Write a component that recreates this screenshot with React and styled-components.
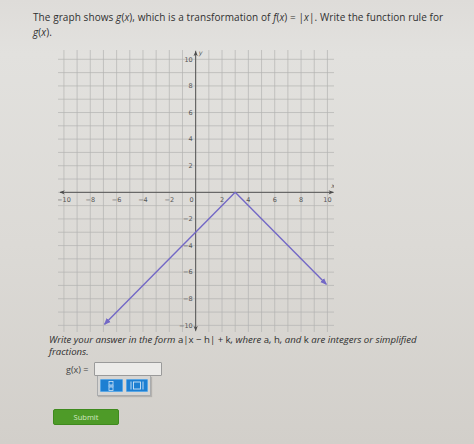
import React from "react";
import styled, { createGlobalStyle } from "styled-components";

const GlobalStyle = createGlobalStyle`
  html, body {
    margin: 0;
    padding: 0;
  }
  body {
    width: 474px;
    height: 444px;
    overflow: hidden;
    background: linear-gradient(180deg, #dedcd9 0%, #e2e1de 12%, #dcdad6 55%, #d2cfca 100%);
    font-family: "Open Sans", "DejaVu Sans", sans-serif;
    color: #2c2c2c;
  }
`;

const Page = styled.div`
  padding: 10px 20px 0 33px;
`;

const Question = styled.p`
  margin: 0;
  font-size: 10px;
  line-height: 15px;
  letter-spacing: 0.08px;
  color: #303030;
  em {
    font-style: italic;
  }
`;

const GraphWrap = styled.div`
  margin: 10px 0 0 25px;
  width: 276px;
  height: 282px;
`;

const Instruction = styled.p`
  margin: 2px 0 0 16px;
  font-size: 9.6px;
  line-height: 12px;
  font-style: italic;
  color: #2e2e2e;
  span {
    font-style: normal;
  }
`;

const AnswerRow = styled.div`
  display: flex;
  align-items: center;
  gap: 6px;
  margin: 4px 0 0 33px;
`;

const Label = styled.span`
  font-size: 9px;
  color: #444;
`;

const Input = styled.div`
  width: 66px;
  height: 12px;
  background: #ecebe9;
  border: 1px solid #9a9a9a;
  border-radius: 1px;
`;

const Palette = styled.div`
  display: flex;
  gap: 3px;
  width: 48px;
  margin: 0 0 0 64px;
  padding: 3px 2px 3px 2px;
  background: #d6d5d3;
  border: 1px solid #a9abad;
  border-top: none;
  box-shadow: 1px 1px 1px rgba(0, 0, 0, 0.15);
`;

const PaletteButton = styled.button`
  display: flex;
  align-items: center;
  justify-content: center;
  width: 23px;
  height: 13px;
  padding: 0;
  background: #1d7fd2;
  border: 1px solid #5aa6e4;
  border-radius: 1px;
`;

const SubmitButton = styled.button`
  display: block;
  margin: 13px 0 0 20px;
  width: 66px;
  height: 16px;
  padding: 0;
  background: #4e9b28;
  border: 1px solid #3f8a1e;
  border-radius: 2px;
  color: #d4e8c4;
  font-family: "Open Sans", "DejaVu Sans", sans-serif;
  font-size: 7.5px;
`;

const W = 276;
const H = 282;
const XMIN = -10.45;
const XMAX = 10.5;
const YMIN = -10.5;
const YMAX = 10.7;
const sx = (x) => ((x - XMIN) / (XMAX - XMIN)) * W;
const sy = (y) => ((YMAX - y) / (YMAX - YMIN)) * H;

const range = (a, b) => {
  const out = [];
  for (let i = a; i <= b; i++) out.push(i);
  return out;
};

const Graph = () => {
  const ticks = range(-10, 10);
  const even = ticks.filter((t) => t % 2 === 0 && t !== 0);
  const line = "#7368c6";
  return (
    <svg width={W} height={H} viewBox={`0 0 ${W} ${H}`}>
      <defs>
        <marker id="ax" viewBox="0 0 10 10" refX="9" refY="5" markerWidth="6" markerHeight="6" orient="auto-start-reverse">
          <path d="M0 1 L10 5 L0 9 L3 5 Z" fill="#4a4a4a" />
        </marker>
        <marker id="ln" viewBox="0 0 10 10" refX="8" refY="5" markerWidth="5" markerHeight="5" orient="auto">
          <path d="M0 1 L10 5 L0 9 Z" fill={line} />
        </marker>
      </defs>
      {ticks.map((t) => (
        <line key={"v" + t} x1={sx(t)} y1={0} x2={sx(t)} y2={H} stroke="#b3b3b1" strokeWidth="0.7" />
      ))}
      {ticks.map((t) => (
        <line key={"h" + t} x1={0} y1={sy(t)} x2={W} y2={sy(t)} stroke="#b3b3b1" strokeWidth="0.7" />
      ))}
      <line x1={sx(-10.3)} y1={sy(0)} x2={sx(10.45)} y2={sy(0)} stroke="#4a4a4a" strokeWidth="0.9" markerStart="url(#ax)" markerEnd="url(#ax)" />
      <line x1={sx(0)} y1={sy(-10.4)} x2={sx(0)} y2={sy(10.6)} stroke="#4a4a4a" strokeWidth="0.9" markerStart="url(#ax)" markerEnd="url(#ax)" />
      <g fontFamily="DejaVu Sans, sans-serif" fontSize="6.5" fill="#555">
        {even.map((t) => (
          <text key={"xl" + t} x={sx(t)} y={sy(0) + 10} textAnchor="middle">
            {t < 0 ? "\u2212" + Math.abs(t) : t}
          </text>
        ))}
        <text x={sx(0) - 4} y={sy(0) + 10} textAnchor="middle">0</text>
        {even.map((t) => (
          <text key={"yl" + t} x={sx(0) - 3} y={sy(t) + 2.3} textAnchor="end">
            {t < 0 ? "\u2212" + Math.abs(t) : t}
          </text>
        ))}
        <text x={sx(10.3)} y={sy(0) - 4} fontStyle="italic">x</text>
        <text x={sx(0) + 3} y={sy(10.35)} fontStyle="italic">y</text>
      </g>
      <polyline
        points={`${sx(3)},${sy(0)} ${sx(-6.9)},${sy(-9.9)}`}
        fill="none"
        stroke={line}
        strokeWidth="1.4"
        markerEnd="url(#ln)"
      />
      <polyline
        points={`${sx(3)},${sy(0)} ${sx(9.9)},${sy(-6.9)}`}
        fill="none"
        stroke={line}
        strokeWidth="1.4"
        markerEnd="url(#ln)"
      />
    </svg>
  );
};

const FractionIcon = () => (
  <svg width="6" height="10" viewBox="0 0 6 10">
    <rect x="1" y="0.5" width="4" height="3.5" fill="none" stroke="#cfe4f7" strokeWidth="0.8" />
    <line x1="0" y1="5" x2="6" y2="5" stroke="#cfe4f7" strokeWidth="0.8" />
    <rect x="1" y="6" width="4" height="3.5" fill="none" stroke="#cfe4f7" strokeWidth="0.8" />
  </svg>
);

const AbsIcon = () => (
  <svg width="14" height="9" viewBox="0 0 14 9">
    <line x1="1" y1="0.5" x2="1" y2="8.5" stroke="#cfe4f7" strokeWidth="0.9" />
    <rect x="3.5" y="1" width="7" height="7" fill="none" stroke="#cfe4f7" strokeWidth="0.9" />
    <line x1="13" y1="0.5" x2="13" y2="8.5" stroke="#cfe4f7" strokeWidth="0.9" />
  </svg>
);

export default function App() {
  return (
    <>
      <GlobalStyle />
      <Page>
        <Question>
          The graph shows <em>g</em>(<em>x</em>), which is a transformation of <em>f</em>(<em>x</em>) = |<em>x</em>|. Write the function rule for
          <br />
          <em>g</em>(<em>x</em>).
        </Question>
        <GraphWrap>
          <Graph />
        </GraphWrap>
        <Instruction>
          Write your answer in the form <span>a|x − h| + k</span>, where <span>a</span>, <span>h</span>, and <span>k</span> are integers or simplified
          <br />
          fractions.
        </Instruction>
        <AnswerRow>
          <Label>g(x) =</Label>
          <Input />
        </AnswerRow>
        <Palette>
          <PaletteButton aria-label="fraction">
            <FractionIcon />
          </PaletteButton>
          <PaletteButton aria-label="absolute value">
            <AbsIcon />
          </PaletteButton>
        </Palette>
        <SubmitButton>Submit</SubmitButton>
      </Page>
    </>
  );
}
